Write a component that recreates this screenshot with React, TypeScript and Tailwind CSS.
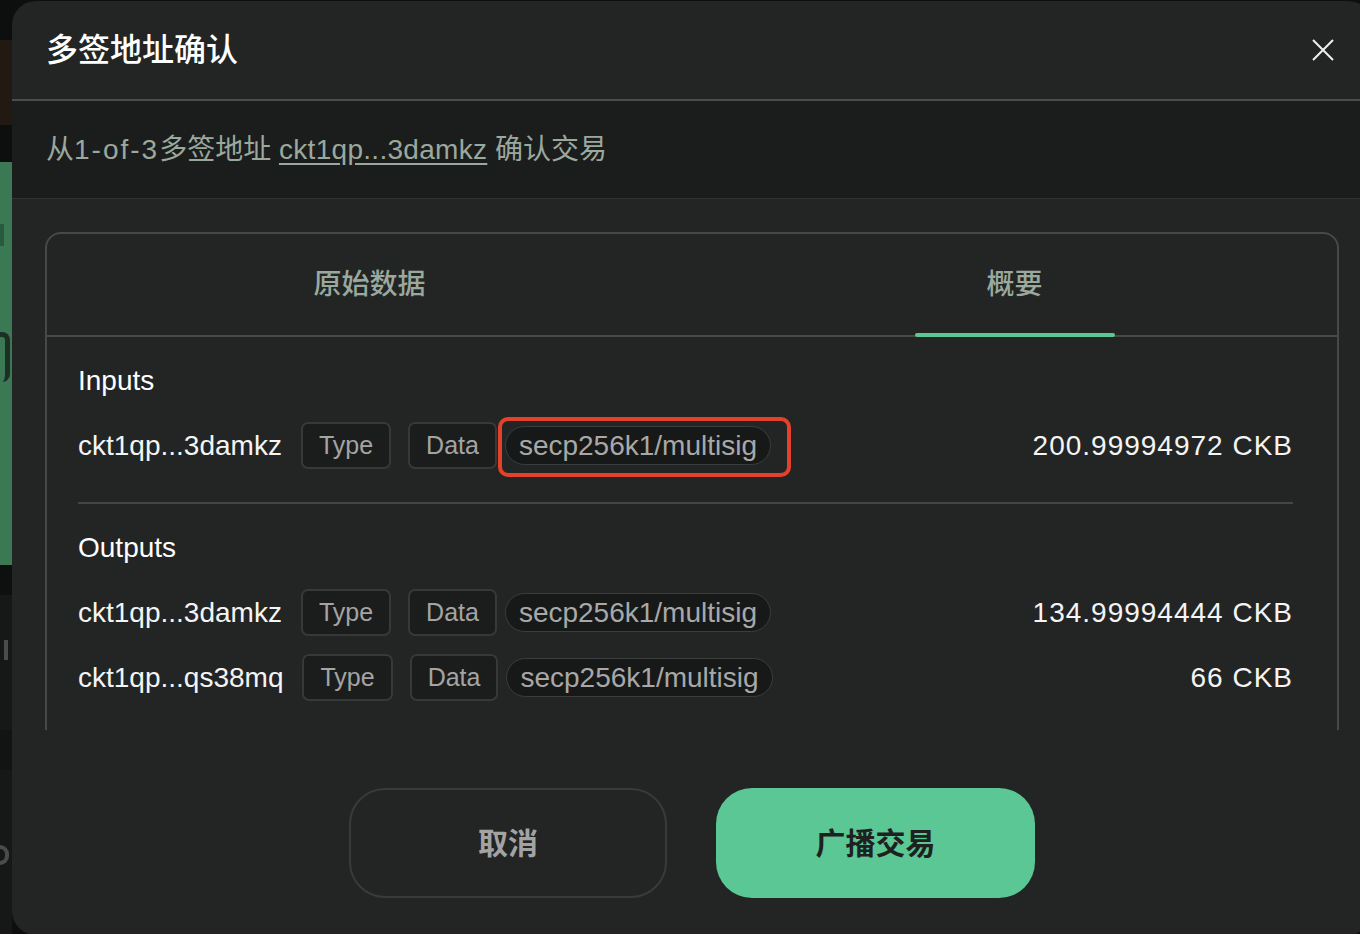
import { ReactNode } from "react";

const inputs = [
  { address: "ckt1qp...3damkz", lock: "secp256k1/multisig", amount: "200.99994972 CKB", marked: true },
];

const outputs = [
  { address: "ckt1qp...3damkz", lock: "secp256k1/multisig", amount: "134.99994444 CKB", marked: false },
  { address: "ckt1qp...qs38mq", lock: "secp256k1/multisig", amount: "66 CKB", marked: false },
];

const Tag = ({ children }: { children: ReactNode }) => (
  <span className="flex h-[47px] items-center rounded-[7px] border-2 border-[#363938] bg-[#1b1d1c] px-[16px] text-[25px] text-[#a4a4a4]">
    {children}
  </span>
);

const CellRow = ({ cell }: { cell: (typeof inputs)[number] }) => (
  <div className="flex h-[47px] items-center">
    <span className="text-[28px] text-[#f4f4f4]">{cell.address}</span>
    <span className="ml-[19px]">
      <Tag>Type</Tag>
    </span>
    <span className="ml-[17px]">
      <Tag>Data</Tag>
    </span>
    <span className="relative ml-[8px]">
      <span className="flex h-[39px] items-center rounded-full border border-[#3a3d3c] bg-[#171918] px-[13px] text-[28px] text-[#a8a8a8]">
        {cell.lock}
      </span>
      {cell.marked && (
        <span className="absolute -top-[9px] -right-[20px] -bottom-[12px] -left-[7px] rounded-[10px] border-4 border-[#e5412a]" />
      )}
    </span>
    <span className="ml-auto text-[28px] tracking-[1px] text-[#f4f4f4]">{cell.amount}</span>
  </div>
);

// the page behind the dialog, only a sliver shows on the left
const PageEdge = () => (
  <div className="flex w-[12px] shrink-0 flex-col overflow-hidden">
    <div className="h-[40px] bg-[#0d0f0e]" />
    <div className="h-[85px] bg-[#221a12]" />
    <div className="h-[37px] bg-[#0d0f0e]" />
    <div className="relative h-[403px] bg-[#3b7955]">
      <div className="absolute top-[62px] left-0 h-[22px] w-[4px] bg-[#2a5a3e]" />
      <div className="absolute top-[170px] left-0 h-[50px] w-[10px] rounded-r-[8px] border-t-[5px] border-r-[5px] border-[#1d2e24]" />
    </div>
    <div className="h-[30px] bg-[#0e100f]" />
    <div className="relative flex-1 bg-[#161817]">
      <div className="absolute top-[45px] left-0 h-[20px] w-[8px] border-r-[4px] border-[#4a4c4b]" />
      <div className="absolute top-[135px] h-[40px] w-full bg-[#121413]" />
      <div className="absolute top-[250px] left-0 h-[20px] w-[9px] rounded-r-full border-y-[4px] border-r-[4px] border-[#4a4c4b]" />
    </div>
  </div>
);

export default function App() {
  return (
    <div className="flex h-[934px] w-[1360px] overflow-hidden bg-[#0d0f0e] font-['Liberation_Sans','Noto_Sans_CJK_SC',sans-serif]">
      <PageEdge />
      <div className="mt-px flex h-[934px] w-[1360px] shrink-0 flex-col overflow-hidden rounded-[24px] bg-[#222524]">
        {/* header */}
        <div className="flex h-[100px] shrink-0 items-center justify-between border-b-2 border-[#4a4d4c] pr-[38px] pl-[34px]">
          <h1 className="text-[32px] font-medium text-white">多签地址确认</h1>
          <svg width="22" height="22" viewBox="0 0 22 22" className="text-[#f0f0f0]">
            <path d="M1 1L21 21M21 1L1 21" stroke="currentColor" strokeWidth="2" />
          </svg>
        </div>

        {/* sub header */}
        <div className="flex h-[98px] shrink-0 items-center border-b border-[#303332] bg-[#1b1d1c] pl-[34px] text-[28px] text-[#9aa89e]">
          从<span className="tracking-[2px]">1-of-3</span>多签地址&nbsp;
          <span className="tracking-[0.3px] underline underline-offset-4">ckt1qp...3damkz</span>&nbsp;确认交易
        </div>

        {/* body */}
        <div className="h-[531px] shrink-0 overflow-hidden px-[33px] pt-[33px]">
          <div className="h-[560px] rounded-[16px] border-2 border-[#464948]">
            <div className="flex h-[103px] border-b-2 border-[#464948]">
              <div className="flex flex-1 items-center justify-center text-[28px] font-medium text-[#9aa89e]">原始数据</div>
              <div className="relative flex flex-1 items-center justify-center text-[28px] font-medium text-[#9aa89e]">
                概要
                <span className="absolute -bottom-[2px] left-1/2 h-[4px] w-[200px] -translate-x-1/2 rounded-full bg-[#5cc796]" />
              </div>
            </div>

            <div className="pt-[29px] pr-[44px] pl-[31px]">
              <div className="h-[30px] text-[28px] leading-[30px] font-medium text-white">Inputs</div>
              <div className="mt-[26px] flex flex-col gap-[18px]">
                {inputs.map((cell, i) => (
                  <CellRow key={i} cell={cell} />
                ))}
              </div>
              <div className="mt-[33px] h-[2px] bg-[#434645]" />
              <div className="mt-[29px] h-[30px] text-[28px] leading-[30px] font-medium text-white">Outputs</div>
              <div className="mt-[26px] flex flex-col gap-[18px]">
                {outputs.map((cell, i) => (
                  <CellRow key={i} cell={cell} />
                ))}
              </div>
            </div>
          </div>
        </div>

        {/* footer */}
        <div className="flex justify-center gap-[49px] pt-[58px]">
          <button className="h-[110px] w-[318px] rounded-[36px] border-2 border-[#383b3a] text-[30px] font-bold text-[#a3a3a3]">
            取消
          </button>
          <button className="h-[110px] w-[319px] rounded-[36px] bg-[#5ac795] text-[30px] font-bold text-[#1f2120]">
            广播交易
          </button>
        </div>
      </div>
    </div>
  );
}
